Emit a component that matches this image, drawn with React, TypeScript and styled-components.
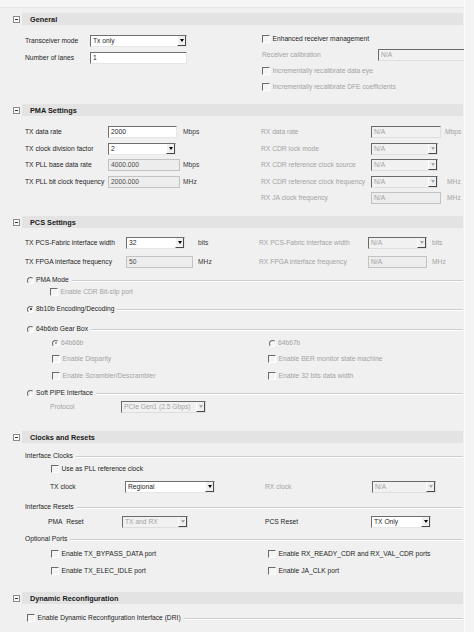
import styled, { createGlobalStyle, css } from "styled-components";

const GlobalStyle = createGlobalStyle`
  html, body {
    margin: 0;
    padding: 0;
    background: #f0f0f0;
  }
  body {
    font-family: "Liberation Sans", Arial, sans-serif;
    font-size: 6.7px;
    color: #1e1e1e;
  }
`;

const Page = styled.div`
  display: flex;
  width: 474px;
  height: 632px;
  background: #f0f0f0;
  overflow: hidden;
`;

const Main = styled.div`
  width: 464px;
  flex-shrink: 0;
  overflow: hidden;
`;

const Edge = styled.div`
  flex: 1;
  border-left: 1px solid #fcfcfc;
  background: #f4f4f4;
`;

const TopStrip = styled.div`
  height: 7px;
  margin-bottom: 5px;
  background: #f5f5f5;
  border-bottom: 1px solid #e6e6e6;
`;

const SectionHead = styled.div`
  display: flex;
  align-items: center;
  height: 12px;
`;

const Toggle = styled.span`
  position: relative;
  box-sizing: border-box;
  width: 7px;
  height: 7px;
  margin: 0 2px 0 13px;
  border: 1px solid #8a8a8a;
  background: #fbfbfb;
  &::after {
    content: "";
    position: absolute;
    left: 1px;
    top: 2px;
    width: 3px;
    height: 1px;
    background: #333;
  }
`;

const HeadBar = styled.div`
  flex: 1;
  height: 12px;
  display: flex;
  align-items: center;
  padding-left: 8px;
  margin-right: 1px;
  background: #e3e3e3;
  font-weight: bold;
  font-size: 7.3px;
  color: #1a1a1a;
`;

const Cols = styled.div<{ $h?: number }>`
  display: grid;
  grid-template-columns: 234px 1fr;
  padding-left: 25px;
  ${(p) => p.$h !== undefined && css`height: ${p.$h}px;`}
`;

const Col = styled.div<{ $pt: number; $pl?: number }>`
  display: flex;
  flex-direction: column;
  padding-top: ${(p) => p.$pt}px;
  padding-left: ${(p) => p.$pl ?? 0}px;
  min-width: 0;
`;

const Block = styled.div<{ $pt?: number }>`
  display: flex;
  flex-direction: column;
  padding-left: 25px;
  padding-top: ${(p) => p.$pt ?? 0}px;
`;

const Row = styled.div<{ $h: number; $pl?: number }>`
  display: flex;
  align-items: flex-start;
  height: ${(p) => p.$h}px;
  padding-left: ${(p) => p.$pl ?? 0}px;
  white-space: nowrap;
`;

const Split = styled.div<{ $h: number; $left: number }>`
  display: grid;
  grid-template-columns: ${(p) => p.$left}px 1fr;
  height: ${(p) => p.$h}px;
  padding-left: 25px;
`;

const Cell = styled.div<{ $pl?: number }>`
  display: flex;
  align-items: flex-start;
  padding-left: ${(p) => p.$pl ?? 0}px;
  white-space: nowrap;
`;

const Txt = styled.span<{ $dim?: boolean }>`
  line-height: 12px;
  color: ${(p) => (p.$dim ? "#a3a3a3" : "#1e1e1e")};
`;

const Label = styled(Txt)<{ $w: number }>`
  width: ${(p) => p.$w}px;
  flex-shrink: 0;
`;

const Slot = styled.div<{ $w: number }>`
  width: ${(p) => p.$w}px;
  flex-shrink: 0;
  display: flex;
`;

const Unit = styled(Txt)`
  color: #3a3a3a;
`;

const Rule = styled.div`
  flex: 1;
  height: 0;
  margin: 6px 1px 0 3px;
  border-top: 1px solid #cdcdcd;
  border-bottom: 1px solid #ffffff;
`;

type Tone = "on" | "off" | "flat";

const Box = styled.div<{ $w: number; $tone: Tone; $muted?: boolean }>`
  box-sizing: border-box;
  flex-shrink: 0;
  display: flex;
  align-items: center;
  width: ${(p) => p.$w}px;
  height: 12px;
  padding-left: 2px;
  border: 1px solid;
  line-height: 10px;
  ${(p) =>
    p.$tone === "on"
      ? css`
          background: #ffffff;
          border-color: #6f6f6f #e6e6e6 #e6e6e6 #6f6f6f;
          color: #1e1e1e;
        `
      : p.$tone === "off"
      ? css`
          background: #f1f1f1;
          border-color: #6a6a6a #dedede #dedede #6a6a6a;
          color: #a3a3a3;
        `
      : css`
          background: #ededed;
          border-color: #c3c3c3;
          color: ${p.$muted ? "#a3a3a3" : "#4a4a4a"};
        `}
`;

const Drop = styled.span<{ $off?: boolean }>`
  box-sizing: border-box;
  margin-left: auto;
  width: 9px;
  height: 10px;
  display: flex;
  align-items: center;
  justify-content: center;
  border-left: 1px solid #ffffff;
  border-right: 1px solid #4a4a4a;
  border-bottom: 1px solid #4a4a4a;
  background: #f0f0f0;
  &::after {
    content: "";
    border-left: 2.5px solid transparent;
    border-right: 2.5px solid transparent;
    border-top: 3px solid ${(p) => (p.$off ? "#a8a8a8" : "#000000")};
  }
`;

const Check = styled.span`
  box-sizing: border-box;
  flex-shrink: 0;
  width: 8px;
  height: 8px;
  margin: 2px 2.5px 0 0;
  border: 1px solid;
  border-color: #6a6a6a #ffffff #ffffff #6a6a6a;
  background: #f4f4f4;
`;

const Radio = styled.span<{ $on?: boolean; $off?: boolean }>`
  position: relative;
  box-sizing: border-box;
  flex-shrink: 0;
  width: 7px;
  height: 7px;
  margin: 2.5px 2px 0 0;
  border-radius: 50%;
  border: 1px solid;
  border-color: #6a6a6a #ffffff #ffffff #6a6a6a;
  background: #f4f4f4;
  ${(p) =>
    p.$on &&
    css`
      &::after {
        content: "";
        position: absolute;
        left: 1.5px;
        top: 1.5px;
        width: 2px;
        height: 2px;
        border-radius: 50%;
        background: ${p.$off ? "#8c8c8c" : "#222222"};
      }
    `}
`;

function Select({ w, value, off }: { w: number; value: string; off?: boolean }) {
  return (
    <Box $w={w} $tone={off ? "off" : "on"}>
      {value}
      <Drop $off={off} />
    </Box>
  );
}

function Head({ title }: { title: string }) {
  return (
    <SectionHead>
      <Toggle />
      <HeadBar>{title}</HeadBar>
    </SectionHead>
  );
}

function Group({ title, radio, on, h }: { title: string; radio?: boolean; on?: boolean; h: number }) {
  return (
    <Row $h={h} $pl={radio ? 2 : 0}>
      {radio && <Radio $on={on} />}
      <Txt>{title}</Txt>
      <Rule />
    </Row>
  );
}

export default function App() {
  return (
    <Page>
      <GlobalStyle />
      <Main>
        <TopStrip />

        <Head title="General" />
        <Cols $h={79}>
          <Col $pt={10}>
            <Row $h={17}>
              <Label $w={65}>Transceiver mode</Label>
              <Select w={97} value="Tx only" />
            </Row>
            <Row $h={17}>
              <Label $w={65}>Number of lanes</Label>
              <Box $w={97} $tone="on">1</Box>
            </Row>
          </Col>
          <Col $pt={8} $pl={3}>
            <Row $h={16}>
              <Check />
              <Txt>Enhanced receiver management</Txt>
            </Row>
            <Row $h={16}>
              <Label $w={116} $dim>Receiver calibration</Label>
              <Box $w={92} $tone="off">N/A</Box>
            </Row>
            <Row $h={16}>
              <Check />
              <Txt $dim>Incrementally recalibrate data eye</Txt>
            </Row>
            <Row $h={16}>
              <Check />
              <Txt $dim>Incrementally recalibrate DFE coefficients</Txt>
            </Row>
          </Col>
        </Cols>

        <Head title="PMA Settings" />
        <Cols $h={100}>
          <Col $pt={10}>
            <Row $h={16.5}>
              <Label $w={83}>TX data rate</Label>
              <Slot $w={75}><Box $w={69} $tone="on">2000</Box></Slot>
              <Unit>Mbps</Unit>
            </Row>
            <Row $h={16.5}>
              <Label $w={83}>TX clock division factor</Label>
              <Slot $w={75}><Select w={68} value="2" /></Slot>
            </Row>
            <Row $h={16.5}>
              <Label $w={83}>TX PLL base data rate</Label>
              <Slot $w={75}><Box $w={72} $tone="flat">4000.000</Box></Slot>
              <Unit>Mbps</Unit>
            </Row>
            <Row $h={16.5}>
              <Label $w={83}>TX PLL bit clock frequency</Label>
              <Slot $w={75}><Box $w={72} $tone="flat">2000.000</Box></Slot>
              <Unit>MHz</Unit>
            </Row>
          </Col>
          <Col $pt={10} $pl={2}>
            <Row $h={16.5}>
              <Label $w={110} $dim>RX data rate</Label>
              <Slot $w={74}><Box $w={70} $tone="off">N/A</Box></Slot>
              <Txt $dim>Mbps</Txt>
            </Row>
            <Row $h={16.5}>
              <Label $w={110} $dim>RX CDR lock mode</Label>
              <Slot $w={74}><Select w={67} value="N/A" off /></Slot>
            </Row>
            <Row $h={16.5}>
              <Label $w={110} $dim>RX CDR reference clock source</Label>
              <Slot $w={74}><Select w={67} value="N/A" off /></Slot>
            </Row>
            <Row $h={16.5}>
              <Label $w={110} $dim>RX CDR reference clock frequency</Label>
              <Slot $w={76}><Select w={67} value="N/A" off /></Slot>
              <Txt $dim>MHz</Txt>
            </Row>
            <Row $h={16.5}>
              <Label $w={110} $dim>RX JA clock frequency</Label>
              <Slot $w={76}><Box $w={70} $tone="flat" $muted>N/A</Box></Slot>
              <Txt $dim>MHz</Txt>
            </Row>
          </Col>
        </Cols>

        <Head title="PCS Settings" />
        <Cols>
          <Col $pt={9}>
            <Row $h={19}>
              <Label $w={101}>TX PCS-Fabric interface width</Label>
              <Slot $w={72}><Select w={59} value="32" /></Slot>
              <Unit>bits</Unit>
            </Row>
            <Row $h={18}>
              <Label $w={101}>TX FPGA interface frequency</Label>
              <Slot $w={72}><Box $w={67} $tone="flat">50</Box></Slot>
              <Unit>MHz</Unit>
            </Row>
          </Col>
          <Col $pt={9}>
            <Row $h={19}>
              <Label $w={109} $dim>RX PCS-Fabric interface width</Label>
              <Slot $w={64}><Select w={59} value="N/A" off /></Slot>
              <Txt $dim>bits</Txt>
            </Row>
            <Row $h={18}>
              <Label $w={109} $dim>RX FPGA interface frequency</Label>
              <Slot $w={64}><Box $w={59} $tone="flat" $muted>N/A</Box></Slot>
              <Txt $dim>MHz</Txt>
            </Row>
          </Col>
        </Cols>
        <Block>
          <Group h={12} radio title="PMA Mode" />
          <Row $h={17} $pl={25}>
            <Check />
            <Txt $dim>Enable CDR Bit-slip port</Txt>
          </Row>
          <Group h={20} radio on title="8b10b Encoding/Decoding" />
          <Group h={14} radio title="64b6xb Gear Box" />
        </Block>
        <Split $h={16} $left={243}>
          <Cell $pl={27}>
            <Radio $on $off />
            <Txt $dim>64b66b</Txt>
          </Cell>
          <Cell $pl={1}>
            <Radio />
            <Txt $dim>64b67b</Txt>
          </Cell>
        </Split>
        <Split $h={17} $left={243}>
          <Cell $pl={27}>
            <Check />
            <Txt $dim>Enable Disparity</Txt>
          </Cell>
          <Cell>
            <Check />
            <Txt $dim>Enable BER monitor state machine</Txt>
          </Cell>
        </Split>
        <Split $h={17} $left={243}>
          <Cell $pl={27}>
            <Check />
            <Txt $dim>Enable Scrambler/Descrambler</Txt>
          </Cell>
          <Cell>
            <Check />
            <Txt $dim>Enable 32 bits data width</Txt>
          </Cell>
        </Split>
        <Block>
          <Group h={14} radio title="Soft PIPE Interface" />
          <Row $h={30} $pl={25}>
            <Label $w={71} $dim>Protocol</Label>
            <Select w={85} value="PCIe Gen1 (2.5 Gbps)" off />
          </Row>
        </Block>

        <Head title="Clocks and Resets" />
        <Block $pt={7}>
          <Group h={13} title="Interface Clocks" />
          <Row $h={18} $pl={26}>
            <Check />
            <Txt>Use as PLL reference clock</Txt>
          </Row>
        </Block>
        <Split $h={20} $left={240}>
          <Cell $pl={25}>
            <Label $w={75}>TX clock</Label>
            <Select w={90} value="Regional" />
          </Cell>
          <Cell>
            <Label $w={107} $dim>RX clock</Label>
            <Select w={64} value="N/A" off />
          </Cell>
        </Split>
        <Block>
          <Group h={15} title="Interface Resets" />
        </Block>
        <Split $h={17} $left={240}>
          <Cell $pl={23}>
            <Label $w={74}>PMA&nbsp;&nbsp;Reset</Label>
            <Select w={66} value="TX and RX" off />
          </Cell>
          <Cell>
            <Label $w={106}>PCS Reset</Label>
            <Select w={60} value="TX Only" />
          </Cell>
        </Split>
        <Block>
          <Group h={15} title="Optional Ports" />
        </Block>
        <Split $h={17} $left={243}>
          <Cell $pl={26}>
            <Check />
            <Txt>Enable TX_BYPASS_DATA port</Txt>
          </Cell>
          <Cell>
            <Check />
            <Txt>Enable RX_READY_CDR and RX_VAL_CDR ports</Txt>
          </Cell>
        </Split>
        <Split $h={27} $left={243}>
          <Cell $pl={26}>
            <Check />
            <Txt>Enable TX_ELEC_IDLE port</Txt>
          </Cell>
          <Cell>
            <Check />
            <Txt>Enable JA_CLK port</Txt>
          </Cell>
        </Split>

        <Head title="Dynamic Reconfiguration" />
        <Block $pt={8}>
          <Row $h={12} $pl={2}>
            <Check />
            <Txt>Enable Dynamic Reconfiguration Interface (DRI)</Txt>
            <Rule />
          </Row>
        </Block>
      </Main>
      <Edge />
    </Page>
  );
}
